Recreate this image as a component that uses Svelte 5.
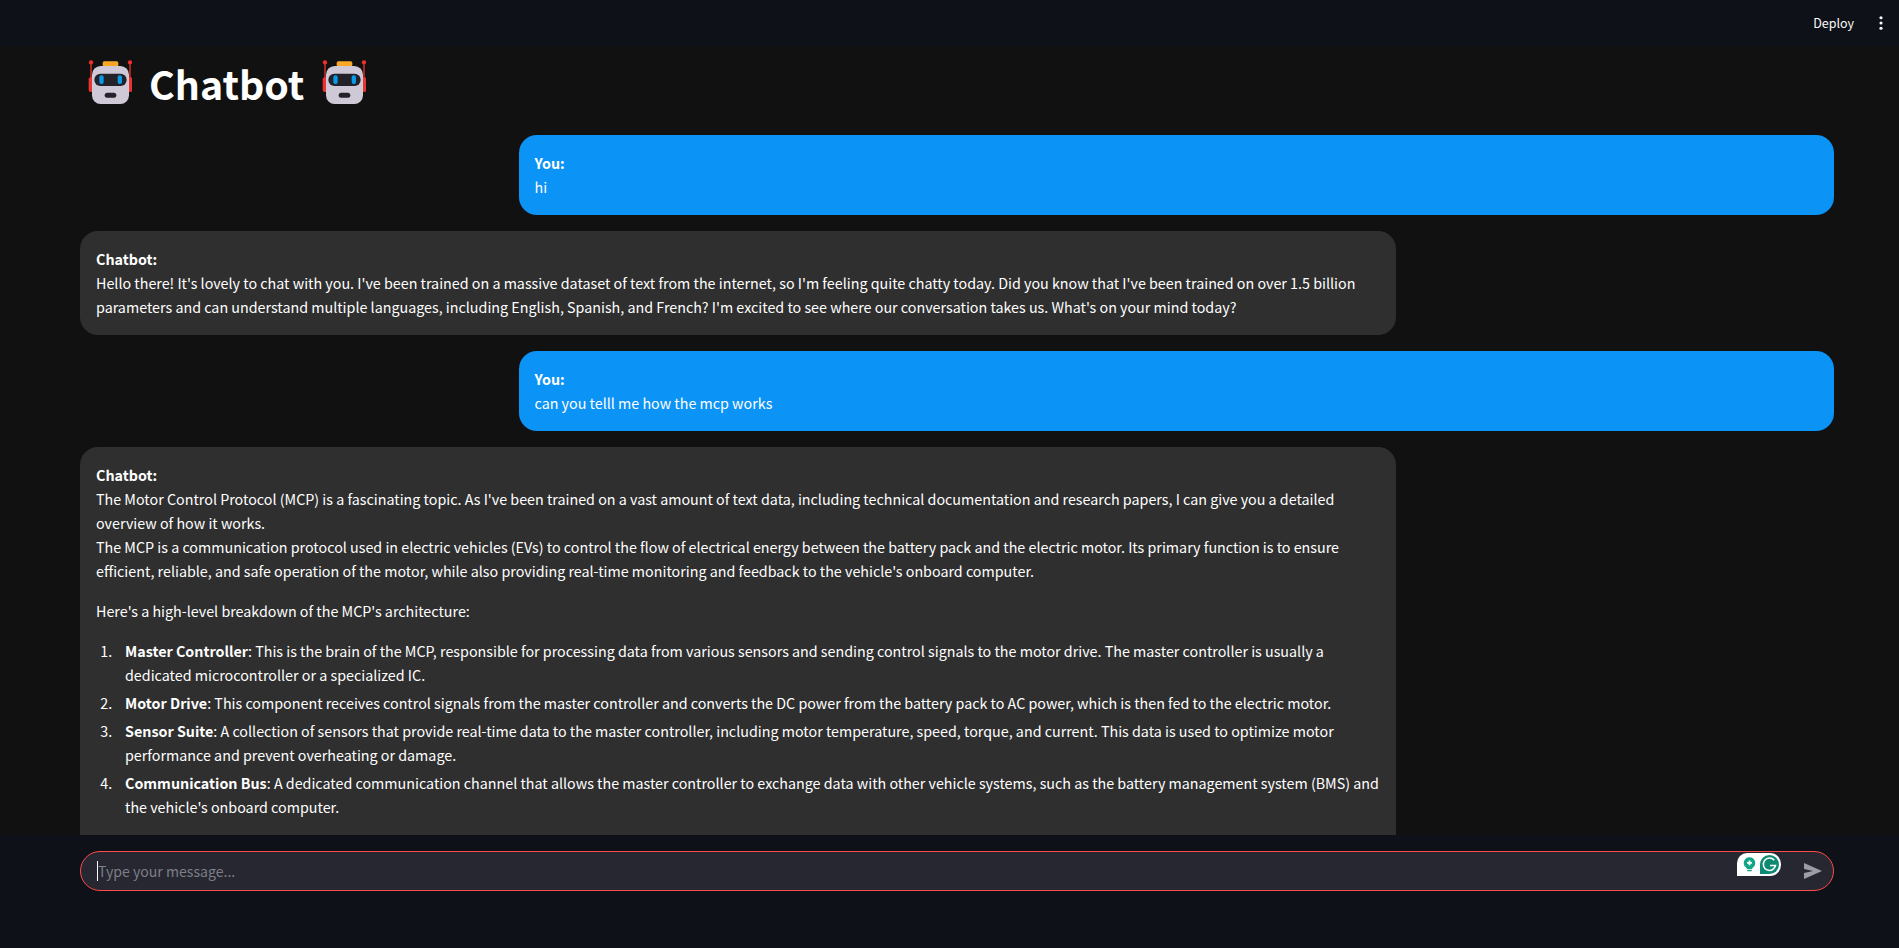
<script>
  const steps = [
    {
      name: 'Master Controller',
      text: 'This is the brain of the MCP, responsible for processing data from various sensors and sending control signals to the motor drive. The master controller is usually a dedicated microcontroller or a specialized IC.'
    },
    {
      name: 'Motor Drive',
      text: 'This component receives control signals from the master controller and converts the DC power from the battery pack to AC power, which is then fed to the electric motor.'
    },
    {
      name: 'Sensor Suite',
      text: 'A collection of sensors that provide real-time data to the master controller, including motor temperature, speed, torque, and current. This data is used to optimize motor performance and prevent overheating or damage.'
    },
    {
      name: 'Communication Bus',
      text: "A dedicated communication channel that allows the master controller to exchange data with other vehicle systems, such as the battery management system (BMS) and the vehicle's onboard computer."
    }
  ];
</script>

{#snippet robot()}
  <svg class="robot" viewBox="20 20 135 135" aria-hidden="true">
    <rect x="30" y="28" width="4" height="50" fill="#e8342f" />
    <rect x="147" y="28" width="4" height="50" fill="#e8342f" />
    <circle cx="32" cy="27" r="6.5" fill="#f0302c" />
    <circle cx="149" cy="27" r="6.5" fill="#f0302c" />
    <rect x="25" y="72" width="14" height="44" rx="6" fill="#e8342f" />
    <rect x="142" y="72" width="14" height="44" rx="6" fill="#e8342f" />
    <rect x="67" y="24" width="47" height="16" rx="5" fill="#f9a825" />
    <rect x="35" y="38" width="111" height="114" rx="26" fill="#cfc8d6" />
    <rect x="42" y="61" width="97" height="37" rx="18" fill="#23222a" />
    <rect x="57" y="66" width="13" height="26" rx="6" fill="#0a9be8" />
    <rect x="112" y="66" width="13" height="26" rx="6" fill="#0a9be8" />
    <rect x="73" y="118" width="35" height="15" rx="7.5" fill="#23222a" />
  </svg>
{/snippet}

<div class="page">
  <header class="topbar">
    <span class="deploy">Deploy</span>
    <svg class="kebab" viewBox="0 0 4 16" aria-hidden="true">
      <circle cx="2" cy="2" r="1.8" />
      <circle cx="2" cy="8" r="1.8" />
      <circle cx="2" cy="14" r="1.8" />
    </svg>
  </header>

  <main class="chat">
    <h1 class="title">
      {@render robot()}
      <span>Chatbot</span>
      {@render robot()}
    </h1>

    <div class="bubble user">
      <strong>You:</strong><br />hi
    </div>

    <div class="bubble bot">
      <strong>Chatbot:</strong><br />
      Hello there! It's lovely to chat with you. I've been trained on a massive dataset of text from the internet, so I'm feeling quite chatty today. Did you know that I've been trained on over 1.5 billion parameters and can understand multiple languages, including English, Spanish, and French? I'm excited to see where our conversation takes us. What's on your mind today?
    </div>

    <div class="bubble user">
      <strong>You:</strong><br />can you telll me how the mcp works
    </div>

    <div class="bubble bot">
      <strong>Chatbot:</strong><br />
      The Motor Control Protocol (MCP) is a fascinating topic. As I've been trained on a vast amount of text data, including technical documentation and research papers, I can give you a detailed overview of how it works.<br />
      The MCP is a communication protocol used in electric vehicles (EVs) to control the flow of electrical energy between the battery pack and the electric motor. Its primary function is to ensure efficient, reliable, and safe operation of the motor, while also providing real-time monitoring and feedback to the vehicle's onboard computer.
      <p>Here's a high-level breakdown of the MCP's architecture:</p>
      <ol>
        {#each steps as step (step.name)}
          <li><strong>{step.name}</strong>: {step.text}</li>
        {/each}
      </ol>
    </div>
  </main>

  <footer class="composer">
    <div class="field">
      <span class="caret"></span>
      <input type="text" placeholder="Type your message..." />
      <div class="grammarly">
        <svg viewBox="0 0 16 20" class="bulb" aria-hidden="true">
          <path d="M8 1a7 7 0 0 0-4.2 12.6c.7.6 1 1.2 1 1.9h6.4c0-.7.3-1.3 1-1.9A7 7 0 0 0 8 1z" fill="#10a588" />
          <rect x="5" y="16.6" width="6" height="1.8" rx=".9" fill="#10a588" />
          <path d="M8 5v6M5 8h6" stroke="#fff" stroke-width="2.2" />
        </svg>
        <svg viewBox="0 0 20 20" class="gmark" aria-hidden="true">
          <path d="M10 0a10 10 0 0 1 0 20H0v-10A10 10 0 0 1 10 0z" fill="#0f8a72" />
          <path d="M15 5.6A6.5 6.5 0 1 0 16.4 11H10.6" fill="none" stroke="#fff" stroke-width="1.6" />
        </svg>
      </div>
      <svg class="send" viewBox="0 0 18 16" aria-hidden="true">
        <path d="M0 0l18 8-18 8v-6l9-2-9-2z" />
      </svg>
    </div>
  </footer>
</div>

<style>
  :global(body) {
    margin: 0;
    background: #111111;
  }

  .page {
    display: flex;
    flex-direction: column;
    height: 948px;
    overflow: hidden;
    color: #fafafa;
    font-family: "Noto Sans CJK SC", "Noto Sans", sans-serif;
    font-size: 14.3px;
    line-height: 24px;
  }

  .topbar {
    flex: none;
    display: flex;
    align-items: center;
    justify-content: flex-end;
    height: 46px;
    background: #0e1117;
    font-size: 12.5px;
  }

  .deploy {
    margin-right: 25px;
  }

  .kebab {
    width: 4px;
    height: 14px;
    margin-right: 16px;
    fill: #fafafa;
  }

  .chat {
    flex: 1;
    min-height: 0;
    overflow: hidden;
    display: flex;
    flex-direction: column;
    gap: 16px;
    padding: 0 65px 0 80px;
  }

  .title {
    flex: none;
    display: flex;
    align-items: center;
    gap: 17px;
    height: 73px;
    margin: 0 0 0 7px;
    font-size: 39.3px;
    font-weight: 700;
    line-height: 1;
    color: #ffffff;
  }

  .robot {
    width: 45px;
    height: 45px;
  }

  .bubble {
    flex: none;
    box-sizing: border-box;
    width: 75%;
    padding: 16px;
    border-radius: 18px;
    color: #ffffff;
  }

  .user {
    margin-left: auto;
    background: #0b93f6;
  }

  .bot {
    background: #2f2f2f;
  }

  .bubble strong {
    font-weight: 600;
  }

  .bubble p {
    margin: 16px 0;
  }

  .bubble ol {
    margin: 0 0 16px;
    padding-left: 29px;
  }

  .bubble li {
    margin-bottom: 4px;
  }

  .bubble li::marker {
    content: counter(list-item) ".    ";
  }

  .composer {
    flex: none;
    height: 113px;
    box-sizing: border-box;
    padding: 16px 65px 0 80px;
    background: #0e1117;
  }

  .field {
    position: relative;
    height: 40px;
    box-sizing: border-box;
    display: flex;
    align-items: center;
    border: 1px solid #ff4b4b;
    border-radius: 20px;
    background: #262730;
  }

  .field input {
    flex: 1;
    min-width: 0;
    height: 100%;
    box-sizing: border-box;
    padding: 0 60px 0 17px;
    border: 0;
    outline: 0;
    background: transparent;
    color: #fafafa;
    font: inherit;
    font-size: 14.1px;
  }

  .field input::placeholder {
    color: #7d7e86;
    opacity: 1;
  }

  .caret {
    position: absolute;
    left: 16px;
    top: 9px;
    width: 1px;
    height: 20px;
    background: #fafafa;
  }

  .grammarly {
    position: absolute;
    right: 52px;
    top: 1px;
    box-sizing: border-box;
    display: flex;
    align-items: center;
    gap: 4px;
    width: 44px;
    height: 23px;
    padding: 0 2px 0 6px;
    background: #ffffff;
    border-radius: 10px 11px 11px 0;
  }

  .bulb {
    width: 13px;
    height: 17px;
  }

  .gmark {
    width: 19px;
    height: 19px;
  }

  .send {
    position: absolute;
    right: 11px;
    top: 11px;
    width: 18px;
    height: 16px;
    fill: #9a9ca8;
  }
</style>
